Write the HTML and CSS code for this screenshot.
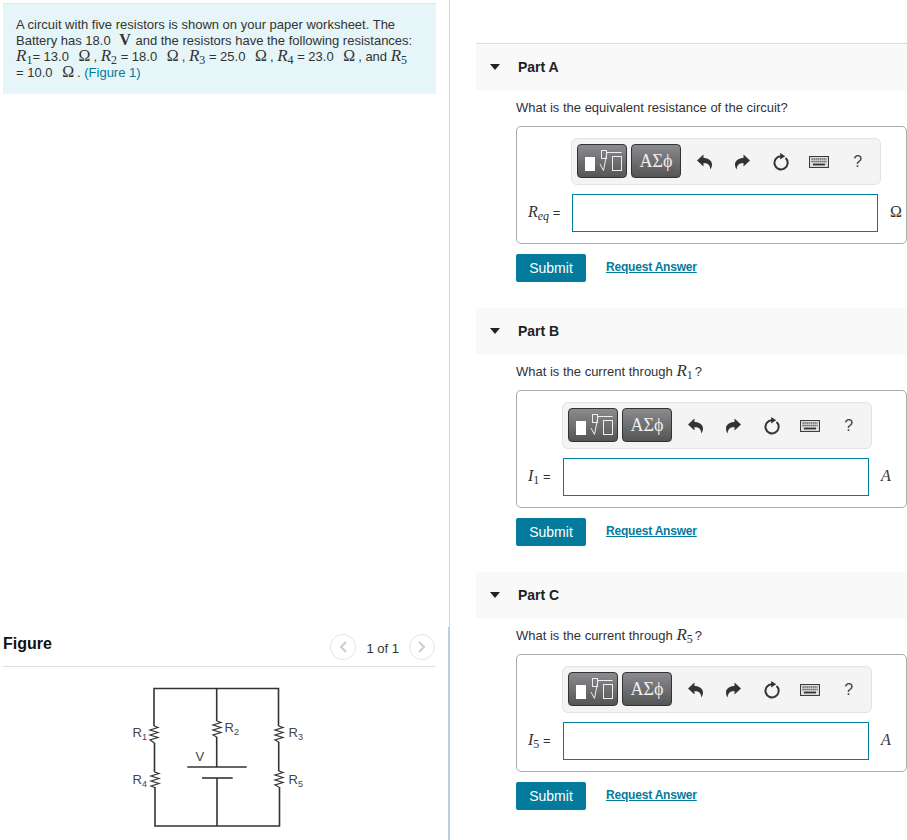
FILE: index.html
```html
<!DOCTYPE html>
<html lang="en">
<head>
    <meta charset="UTF-8">
    <title>Circuit with five resistors</title>
    <link rel="stylesheet" href="styles.css">
</head>
<body>
    <svg class="icon-defs" width="0" height="0">
        <symbol id="icon-undo" viewBox="0 0 15 16">
            <path d="M0 6.5 L6.5 0.5 V4 C11 4 15 6.5 15 10.5 C15 12.5 14.2 14.5 13 15.5 C13.6 12.5 12 9 6.5 9 V12.5 Z"/>
        </symbol>
        <symbol id="icon-reset" viewBox="0 0 18 18">
            <path d="M9 3.2 A6.6 6.6 0 1 0 13.6 5" fill="none" stroke="#333" stroke-width="2"/>
            <path d="M8.2 0 L13.2 3.2 L8.2 6.4 Z"/>
        </symbol>
        <symbol id="icon-keyboard" viewBox="0 0 20 12">
            <rect x="0.5" y="0.5" width="19" height="11" fill="#dcdcdc" stroke="#3c3c3c"/>
            <path d="M2.5 3 H17.5 M2.5 5.500 H17.5" stroke="#555" stroke-width="1.3" stroke-dasharray="1.3 0.7"/>
            <path d="M4 8.500 H16" stroke="#333" stroke-width="1.8"/>
        </symbol>
        <symbol id="icon-math" viewBox="0 0 50 34">
            <rect x="8" y="13" width="10" height="14" fill="#fff"/>
            <rect x="24.500" y="6.500" width="5" height="8" fill="none" stroke="#eee"/>
            <path d="M23 20 L26.500 26.500 L30 8.500 H44.700" fill="none" stroke="#eee"/>
            <rect x="35.500" y="12.500" width="9" height="14" fill="none" stroke="#eee"/>
        </symbol>
    </svg>

    <div class="page">
        <div class="left">
            <div class="left-top">
                <div class="intro">
                    A circuit with five resistors is shown on your paper worksheet. The
                    Battery has 18.0 <span class="unit-inline bold">V</span> and the resistors have the following resistances:
                    <span class="math">R<sub>1</sub></span>= 13.0 <span class="unit-inline ohm">Ω</span>, <span class="math">R<sub>2</sub></span> = 18.0 <span class="unit-inline ohm">Ω</span>, <span class="math">R<sub>3</sub></span> = 25.0 <span class="unit-inline ohm">Ω</span>, <span class="math">R<sub>4</sub></span> = 23.0 <span class="unit-inline ohm">Ω</span>, and <span class="math">R<sub>5</sub></span>
                    = 10.0 <span class="unit-inline ohm">Ω</span>. <a class="link" href="#">(Figure 1)</a>
                </div>
            </div>
            <div class="left-bottom">
                <div class="figure-head">
                    <span class="figure-title">Figure</span>
                    <div class="pager">
                        <span class="pager-btn">
                            <svg width="8" height="12" viewBox="0 0 8 12"><path d="M7 1 L2 6 L7 11" fill="none" stroke="#ccc" stroke-width="2"/></svg>
                        </span>
                        <span class="pager-text">1 of 1</span>
                        <span class="pager-btn">
                            <svg width="8" height="12" viewBox="0 0 8 12"><path d="M1 1 L6 6 L1 11" fill="none" stroke="#ccc" stroke-width="2"/></svg>
                        </span>
                    </div>
                </div>
                <svg class="circuit" width="445" height="173" viewBox="3 667 445 173">
                    <g class="wire">
                        <path d="M154 726 V688.500 H278.500 V726"/>
                        <path d="M154.500 743 V772"/>
                        <path d="M155 787 V826 H279.500 V787"/>
                        <path d="M278.700 742 V771"/>
                        <path d="M216.700 688.500 V721"/>
                        <path d="M216.700 737 V767"/>
                        <path d="M217 778 V826"/>
                        <path d="M187.300 767 H246.700"/>
                        <path d="M202 778 H232.700"/>
                    </g>
                    <g class="resistor">
                        <path d="M154 726 L158 727.500 L150 730 L158 732.500 L150 735 L158 737.500 L150 740 L154.500 743"/>
                        <path d="M154.500 772 L159 773.500 L151 776 L159 778.500 L151 781 L159 783.500 L151 786 L155 787.500"/>
                        <path d="M216.700 721 L221 722.500 L213 725 L221 727.500 L213 730 L221 732.500 L213 735 L216.700 737"/>
                        <path d="M278.500 726 L283 727.500 L275 730 L283 732.500 L275 735 L283 737.500 L275 740 L278.700 742"/>
                        <path d="M278.700 771 L283 772.500 L275 775 L283 777.500 L275 780 L283 782.500 L275 785 L279 787"/>
                    </g>
                    <g class="circuit-label">
                        <text x="132.500" y="737">R<tspan class="circuit-sub" dy="3">1</tspan></text>
                        <text x="132.500" y="784">R<tspan class="circuit-sub" dy="3">4</tspan></text>
                        <text x="224.500" y="732">R<tspan class="circuit-sub" dy="3">2</tspan></text>
                        <text x="288.500" y="737">R<tspan class="circuit-sub" dy="3">3</tspan></text>
                        <text x="288.500" y="784">R<tspan class="circuit-sub" dy="3">5</tspan></text>
                        <text x="195.500" y="761">V</text>
                    </g>
                </svg>
            </div>
        </div>

        <div class="right">
            <section class="part part-first">
                <div class="part-head"><span class="caret"></span><span class="part-title">Part A</span></div>
                <p class="question">What is the equivalent resistance of the circuit?</p>
                <div class="answer-box wide">
                    <div class="toolbar">
                        <span class="tool-btn"><svg width="50" height="34"><use href="#icon-math"/></svg></span>
                        <span class="tool-btn tool-greek">ΑΣϕ</span>
                        <span class="tool-icons">
                            <span class="tool"><svg width="15" height="16"><use href="#icon-undo"/></svg></span>
                            <span class="tool"><svg class="flip" width="15" height="16"><use href="#icon-undo"/></svg></span>
                            <span class="tool"><svg width="18" height="18"><use href="#icon-reset"/></svg></span>
                            <span class="tool"><svg width="20" height="12"><use href="#icon-keyboard"/></svg></span>
                            <span class="tool tool-help">?</span>
                        </span>
                    </div>
                    <div class="answer-row">
                        <span class="answer-label"><span class="math">R<sub class="it">eq</sub></span> =</span>
                        <input class="answer-input" type="text">
                        <span class="answer-unit">Ω</span>
                    </div>
                </div>
                <div class="actions">
                    <button class="submit" type="button">Submit</button>
                    <a class="request" href="#">Request Answer</a>
                </div>
            </section>

            <section class="part">
                <div class="part-head"><span class="caret"></span><span class="part-title">Part B</span></div>
                <p class="question">What is the current through <span class="math">R<sub>1</sub></span>?</p>
                <div class="answer-box">
                    <div class="toolbar">
                        <span class="tool-btn"><svg width="50" height="34"><use href="#icon-math"/></svg></span>
                        <span class="tool-btn tool-greek">ΑΣϕ</span>
                        <span class="tool-icons">
                            <span class="tool"><svg width="15" height="16"><use href="#icon-undo"/></svg></span>
                            <span class="tool"><svg class="flip" width="15" height="16"><use href="#icon-undo"/></svg></span>
                            <span class="tool"><svg width="18" height="18"><use href="#icon-reset"/></svg></span>
                            <span class="tool"><svg width="20" height="12"><use href="#icon-keyboard"/></svg></span>
                            <span class="tool tool-help">?</span>
                        </span>
                    </div>
                    <div class="answer-row">
                        <span class="answer-label"><span class="math">I<sub>1</sub></span> =</span>
                        <input class="answer-input" type="text">
                        <span class="answer-unit it">A</span>
                    </div>
                </div>
                <div class="actions">
                    <button class="submit" type="button">Submit</button>
                    <a class="request" href="#">Request Answer</a>
                </div>
            </section>

            <section class="part">
                <div class="part-head"><span class="caret"></span><span class="part-title">Part C</span></div>
                <p class="question">What is the current through <span class="math">R<sub>5</sub></span>?</p>
                <div class="answer-box">
                    <div class="toolbar">
                        <span class="tool-btn"><svg width="50" height="34"><use href="#icon-math"/></svg></span>
                        <span class="tool-btn tool-greek">ΑΣϕ</span>
                        <span class="tool-icons">
                            <span class="tool"><svg width="15" height="16"><use href="#icon-undo"/></svg></span>
                            <span class="tool"><svg class="flip" width="15" height="16"><use href="#icon-undo"/></svg></span>
                            <span class="tool"><svg width="18" height="18"><use href="#icon-reset"/></svg></span>
                            <span class="tool"><svg width="20" height="12"><use href="#icon-keyboard"/></svg></span>
                            <span class="tool tool-help">?</span>
                        </span>
                    </div>
                    <div class="answer-row">
                        <span class="answer-label"><span class="math">I<sub>5</sub></span> =</span>
                        <input class="answer-input" type="text">
                        <span class="answer-unit it">A</span>
                    </div>
                </div>
                <div class="actions">
                    <button class="submit" type="button">Submit</button>
                    <a class="request" href="#">Request Answer</a>
                </div>
            </section>
        </div>
    </div>
</body>
</html>
```

FILE: styles.css
```css
html, body {
    margin: 0;
    height: 840px;
    overflow: hidden;
}

body {
    font-family: "Liberation Sans", Arial, sans-serif;
    font-size: 13px;
    line-height: 16px;
    color: #333;
    background-color: #fff;
}

.icon-defs {
    display: block;
    height: 0;
}

.page {
    display: flex;
    height: 840px;
}

/* left column */
.left {
    flex: 0 0 450px;
    display: flex;
    flex-direction: column;
}

.left-top {
    height: 627px;
    padding: 3px 0 0 3px;
    box-sizing: border-box;
    border-right: 1px solid #ccd3df;
}

.left-bottom {
    flex: 1;
    padding: 7px 0 0 3px;
    border-right: 2px solid #bcd0e3;
}

.intro {
    width: 433px;
    box-sizing: border-box;
    padding: 13px 20px 13px 13px;
    background-color: #e6f5f7;
    border-top: 1px solid #dde6ea;
}

.unit-inline {
    font-family: "Liberation Serif", serif;
    font-size: 16px;
    line-height: 0;
    margin: 0 1px 0 5px;
}

.unit-inline.ohm {
    margin: 0 3px 0 6px;
}

.bold {
    font-weight: bold;
}

.math {
    font-family: "Liberation Serif", serif;
    font-style: italic;
    font-size: 17px;
    line-height: 0;
}

.math sub {
    font-size: 12px;
    font-style: normal;
    line-height: 0;
    vertical-align: -3px;
}

.math sub.it,
.it {
    font-style: italic;
}

.link {
    color: #007c9e;
    text-decoration: none;
}

.figure-head {
    width: 432px;
    display: flex;
    justify-content: space-between;
    align-items: center;
    padding-bottom: 6px;
    border-bottom: 1px solid #ddd;
}

.figure-title {
    font-size: 16px;
    font-weight: bold;
    color: #111;
    margin-top: -6px;
}

.pager {
    display: flex;
    align-items: center;
}

.pager-btn {
    width: 24px;
    height: 24px;
    border: 1px solid #e5e5e5;
    border-radius: 50%;
    display: flex;
    align-items: center;
    justify-content: center;
}

.pager-text {
    margin: 3px 10px 0;
}

.circuit {
    display: block;
}

.wire path {
    fill: none;
    stroke: #333;
    stroke-width: 1.6;
}

.resistor path {
    fill: none;
    stroke: #333;
    stroke-width: 1.2;
}

.circuit-label text {
    font-size: 13px;
    fill: #444;
}

.circuit-label .circuit-sub {
    font-size: 9px;
}

/* right column */
.right {
    flex: 1;
    min-width: 0;
    padding: 43px 0 0 26px;
}

.part {
    margin-bottom: 26px;
}

.part-first .part-head {
    border-top: 1px solid #ddd;
}

.part-head {
    height: 46px;
    padding-left: 14px;
    display: flex;
    align-items: center;
    background-color: #f9f9f9;
    font-size: 14px;
}

.caret {
    width: 0;
    height: 0;
    border-left: 5.500px solid transparent;
    border-right: 5.500px solid transparent;
    border-top: 6px solid #222;
}

.part-title {
    margin-left: 18px;
    font-weight: bold;
    color: #222;
}

.question {
    margin: 0 0 0 40px;
    height: 36px;
    line-height: 35px;
}

.question .math {
    margin-right: 2px;
}

.answer-box {
    --label-w: 35px;
    margin-left: 40px;
    padding: 11px 0 11px 11px;
    border: 1px solid #aaa;
    border-radius: 5px;
}

.answer-box.wide {
    --label-w: 44px;
}

.toolbar {
    width: 310px;
    height: 47px;
    box-sizing: border-box;
    margin-left: calc(var(--label-w) - 1px);
    margin-bottom: 9px;
    padding: 5px 0 5px 5px;
    display: flex;
    background-color: #f4f4f4;
    border: 1px solid #e3e3e3;
    border-radius: 6px;
}

.tool-btn {
    flex: none;
    width: 50px;
    height: 34px;
    margin-right: 4px;
    box-sizing: border-box;
    border: 1px solid #333;
    border-radius: 4px;
    background: linear-gradient(#8b8b90, #555);
    overflow: hidden;
}

.tool-btn svg {
    display: block;
    margin: -1px;
}

.tool-greek {
    color: #eee;
    font-family: "Liberation Serif", serif;
    font-size: 18px;
    line-height: 32px;
    text-align: center;
}

.tool-icons {
    display: flex;
    flex: none;
}

.tool {
    flex: none;
    width: 38.400px;
    display: flex;
    align-items: center;
    justify-content: center;
    fill: #333;
}

.flip {
    transform: scaleX(-1);
}

.tool-help {
    font-size: 16px;
    color: #444;
}

.answer-row {
    display: flex;
    align-items: center;
}

.answer-label {
    width: var(--label-w);
    flex: none;
    white-space: nowrap;
}

.answer-label .math {
    font-size: 16px;
}

.answer-input {
    width: 306px;
    height: 38px;
    box-sizing: border-box;
    margin: 0;
    border: 1px solid #007c9e;
    background-color: #fff;
}

.answer-unit {
    margin: 0 0 2px 12px;
    font-family: "Liberation Serif", serif;
    font-size: 16px;
}

.actions {
    margin: 10px 0 0 40px;
    display: flex;
    align-items: center;
}

.submit {
    width: 70px;
    height: 28px;
    padding: 0;
    border: none;
    border-radius: 2px;
    background-color: #047b9c;
    color: #fff;
    font-family: inherit;
    font-size: 14px;
}

.request {
    margin-left: 20px;
    margin-top: -2px;
    color: #007c9e;
    font-size: 12px;
    font-weight: bold;
    letter-spacing: -0.200px;
}
```
